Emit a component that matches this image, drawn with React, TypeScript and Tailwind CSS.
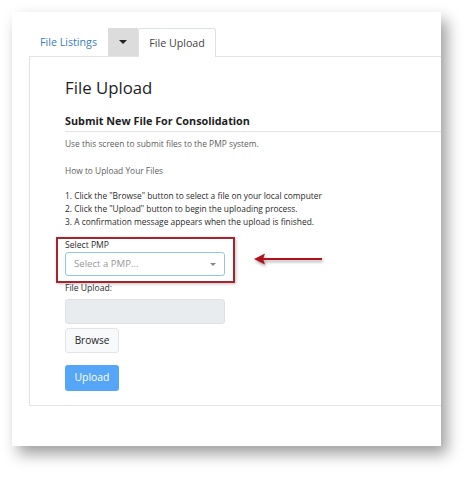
const font = { fontFamily: '"Segoe UI", "Open Sans", "Noto Sans", sans-serif' };

function Tabs() {
  return (
    <div className="flex items-end h-[29px] pl-[17px]">
      <div className="h-[28px] px-[11px] flex items-center text-[10.7px] text-[#3a7ec0]">File Listings</div>
      <div className="h-[28px] w-[30px] bg-[#dcdcdc] flex items-center justify-center">
        <span className="w-0 h-0 border-l-[4px] border-r-[4px] border-t-[4px] border-l-transparent border-r-transparent border-t-[#222]" />
      </div>
      <div className="h-[29px] w-[78px] -mb-px relative bg-white border border-b-0 border-[#dee2e6] rounded-t-[3px] flex items-center justify-center text-[10.7px] text-[#444]">
        File Upload
      </div>
    </div>
  );
}

function Arrow() {
  return (
    <svg width="70" height="20" viewBox="0 0 70 20" className="drop-shadow-[1px_2px_1.5px_rgba(0,0,0,0.35)]">
      <line x1="10" y1="9" x2="69" y2="9" stroke="#b0121b" strokeWidth="2.2" />
      <polygon points="1,9 12,3.5 10,9 12,14.5" fill="#b0121b" />
    </svg>
  );
}

export default function App() {
  return (
    <div className="w-[474px] h-[479px] bg-white overflow-hidden pt-[12px] pl-[12px]" style={font}>
      <div className="w-[429px] h-[434px] bg-white overflow-hidden pt-[15px] shadow-[6px_8px_14px_rgba(0,0,0,0.38)]">
        <Tabs />
        <div className="ml-[17px] w-[440px] h-[350px] border border-[#e3e3e3] pl-[35px] pt-[19px] text-[#222]">
          <h1 className="text-[16.8px] leading-[24px] text-[#1e1e1e]">File Upload</h1>
          <h2 className="mt-[12px] text-[10.8px] font-bold leading-[18px] text-[#1e1e1e] border-b border-[#e3e3e3] pb-[1px]">
            Submit New File For Consolidation
          </h2>
          <p className="mt-[5px] text-[8.4px] leading-[13px] text-[#5e5e5e]">Use this screen to submit files to the PMP system.</p>
          <p className="mt-[14px] text-[8.4px] leading-[13px] text-[#5e5e5e]">How to Upload Your Files</p>
          <ol className="mt-[12px] text-[8.4px] leading-[13px] text-[#2a2a2a]">
            <li>1. Click the "Browse" button to select a file on your local computer</li>
            <li>2. Click the "Upload" button to begin the uploading process.</li>
            <li>3. A confirmation message appears when the upload is finished.</li>
          </ol>
          <div className="mt-[9px] flex items-center">
            <div className="-ml-[9px] w-[179px] h-[46px] border-2 border-[#a3262f] shadow-[1px_1px_3px_rgba(0,0,0,0.25)] pl-[7px]">
              <div className="text-[8.6px] leading-[12px] text-[#2a2a2a]">Select PMP</div>
              <div className="mt-px w-[160px] h-[24px] rounded-[3px] border border-[#94c4ee] flex items-center justify-between pl-[8px] pr-[8px] text-[9.6px] text-[#999]">
                <span>Select a PMP...</span>
                <span className="w-0 h-0 border-l-[3px] border-r-[3px] border-t-[3px] border-l-transparent border-r-transparent border-t-[#888]" />
              </div>
            </div>
            <div className="ml-[18px]">
              <Arrow />
            </div>
          </div>
          <div className="-mt-[2px] text-[8.6px] leading-[14px] text-[#2a2a2a]">File Upload:</div>
          <div className="mt-[4px] w-[160px] h-[25px] rounded-[3px] bg-[#e9ecef] border border-[#dde1e5]" />
          <button className="mt-[4px] block w-[54px] h-[25px] rounded-[3px] bg-[#f8f9fa] border border-[#e2e4e6] text-[10px] text-[#222]">
            Browse
          </button>
          <button className="mt-[12px] block w-[54px] h-[26px] rounded-[3px] bg-[#56a6f7] text-[10.4px] text-white">
            Upload
          </button>
        </div>
      </div>
    </div>
  );
}
